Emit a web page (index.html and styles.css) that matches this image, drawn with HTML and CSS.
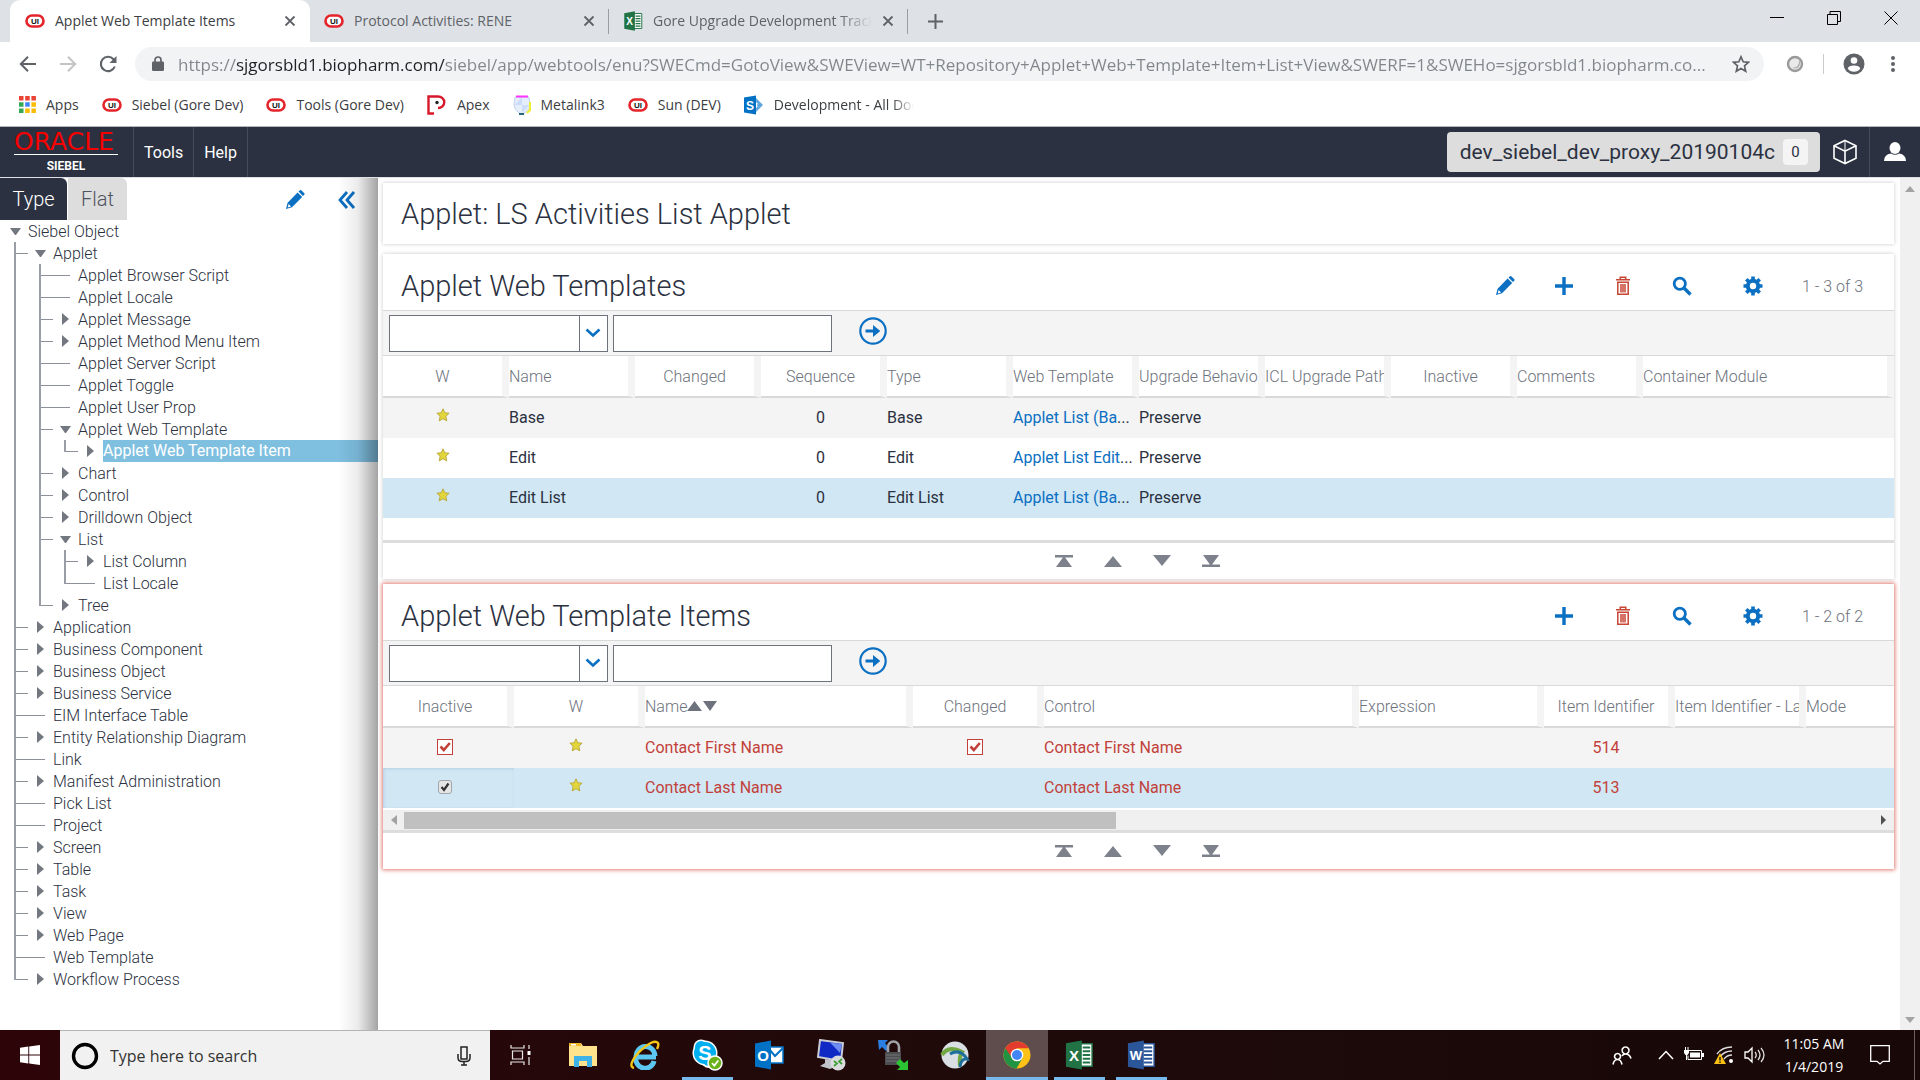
FILE: index.html
```html
<!DOCTYPE html>
<html lang="en">
<head>
  <meta charset="UTF-8">
  <meta name="viewport" content="width=device-width, initial-scale=1.0">
  <title>Applet Web Template Items</title>
  <link rel="stylesheet" href="styles.css">
</head>
<body>
  <!-- shared icons -->
  <svg class="sprite" aria-hidden="true">
    <symbol id="ui" viewBox="0 0 20 14">
      <rect x="1.500" y="1.500" width="17" height="11" rx="5.500" fill="#fff" stroke="#e3242b" stroke-width="2.600"/>
      <text x="10" y="9.800" text-anchor="middle" font-size="8" font-weight="700" fill="#111">UI</text>
    </symbol>
    <symbol id="close" viewBox="0 0 12 12"><path d="M1.5 1.5l9 9M10.5 1.5l-9 9" stroke="#5f6368" stroke-width="1.8"/></symbol>
    <symbol id="pencil" viewBox="0 0 20 20"><path d="M13.5 1.5l1.500-1.200q.8-.5 1.500.2l2.800 2.800q.6.700 0 1.400l-1.400 1.400zM12.600 2.500l4.600 4.600L7 17.200 1 19l1.600-6.300zM3.600 14l-.9 3.400 3.400-1z" fill="#0b6fc2" fill-rule="evenodd"/></symbol>
    <symbol id="plus" viewBox="0 0 20 20"><path d="M8.300 1h3.400v7.300H19v3.400h-7.300V19H8.300v-7.300H1V8.300h7.300z" fill="#0b6fc2"/></symbol>
    <symbol id="trash" viewBox="0 0 16 20">
      <path d="M1 3.700h14M5.300 3.500V1.200h5.400v2.300M2 6.200h12" fill="none" stroke="#c74634" stroke-width="1.600"/>
      <path d="M2.800 6v12.200h10.400V6M6 8v8.500M10 8v8.500M8 8v8.500" fill="none" stroke="#c74634" stroke-width="1.500"/>
    </symbol>
    <symbol id="search" viewBox="0 0 20 20"><circle cx="7.800" cy="7.800" r="5.600" fill="none" stroke="#0b6fc2" stroke-width="2.800"/><path d="M12 12l6.500 6.500" stroke="#0b6fc2" stroke-width="3.400"/></symbol>
    <symbol id="gear" viewBox="0 0 20 20">
      <circle cx="10" cy="10" r="5.200" fill="none" stroke="#0b6fc2" stroke-width="4"/>
      <path d="M10 .5v4M10 15.500v4M.5 10h4M15.500 10h4M3.300 3.300l2.800 2.800M13.900 13.900l2.800 2.800M3.300 16.700l2.800-2.800M13.900 6.100l2.800-2.800" stroke="#0b6fc2" stroke-width="3.600"/>
    </symbol>
    <symbol id="go" viewBox="0 0 28 28"><circle cx="14" cy="14" r="12.700" fill="none" stroke="#0b6fc2" stroke-width="2.200"/><path d="M6.500 12.500h7.500V8l7.300 6-7.300 6v-4.500H6.500z" fill="#0b6fc2"/></symbol>
    <symbol id="star" viewBox="0 0 14 14"><path d="M7 .8l1.800 4 4.300.4-3.200 3 .9 4.700L7 10.700l-3.800 2.200.9-4.700-3.200-3 4.300-.4z" fill="#e3d63c" stroke="#b5a738" stroke-width=".9"/></symbol>
    <symbol id="first" viewBox="0 0 20 12"><path d="M1 0h18v2.500H1zM10 1l8 11H2z" fill="#7d818c"/></symbol>
    <symbol id="prev" viewBox="0 0 20 12"><path d="M10 1l9 11H1z" fill="#7d818c"/></symbol>
    <symbol id="next" viewBox="0 0 20 12"><path d="M10 11L1 0h18z" fill="#7d818c"/></symbol>
    <symbol id="last" viewBox="0 0 20 12"><path d="M1 12h18V9.500H1zM10 11l8-11H2z" fill="#7d818c"/></symbol>
    <symbol id="excel" viewBox="0 0 30 32">
      <path d="M16 4h13v24H16z" fill="#fff" stroke="#217346" stroke-width="1.500"/>
      <path d="M19 8h8M19 12h8M19 16h8M19 20h8M19 24h8" stroke="#217346" stroke-width="2"/>
      <path d="M1 3.500L18 .5v31L1 28.500z" fill="#217346"/>
      <text x="9.500" y="22" text-anchor="middle" font-size="16" font-weight="700" fill="#fff">X</text>
    </symbol>
    <symbol id="word" viewBox="0 0 30 32">
      <path d="M16 4h13v24H16z" fill="#fff" stroke="#2b579a" stroke-width="1.500"/>
      <path d="M18 8h9M18 12h9M18 16h9M18 20h9M18 24h9" stroke="#2b579a" stroke-width="2"/>
      <path d="M1 3.500L18 .5v31L1 28.500z" fill="#2b579a"/>
      <text x="9.500" y="21" text-anchor="middle" font-size="14" font-weight="700" fill="#fff">W</text>
    </symbol>
  </svg>

  <header class="browser">
    <div class="tab-strip">
      <div class="tab active">
        <svg class="fav"><use href="#ui"/></svg>
        <span class="tab-title">Applet Web Template Items</span>
        <button class="plain" aria-label="Close tab"><svg class="x"><use href="#close"/></svg></button>
      </div>
      <div class="tab">
        <svg class="fav"><use href="#ui"/></svg>
        <span class="tab-title">Protocol Activities: RENE</span>
        <button class="plain" aria-label="Close tab"><svg class="x"><use href="#close"/></svg></button>
      </div>
      <div class="tab">
        <svg class="fav tall"><use href="#excel"/></svg>
        <span class="tab-title fade">Gore Upgrade Development Tracker</span>
        <button class="plain" aria-label="Close tab"><svg class="x"><use href="#close"/></svg></button>
      </div>
      <button class="plain new-tab" aria-label="New tab"><svg width="15" height="15" viewBox="0 0 15 15"><path d="M7.500 0v15M0 7.500h15" stroke="#5f6368" stroke-width="2"/></svg></button>
      <div class="window-buttons">
        <button class="plain" aria-label="Minimize"><svg width="14" height="14"><path d="M0 6.500h14" stroke="#000"/></svg></button>
        <button class="plain" aria-label="Restore"><svg width="14" height="14"><path d="M.5 3.500h10v10H.5zM3 3.500V.5h10.500v10H11" fill="none" stroke="#000"/></svg></button>
        <button class="plain" aria-label="Close"><svg width="14" height="14"><path d="M.5.5l13 13M13.500.5l-13 13" stroke="#000"/></svg></button>
      </div>
    </div>

    <div class="toolbar">
      <button class="plain" aria-label="Back"><svg width="18" height="18"><path d="M17 9H2.500M9 1.800L1.800 9 9 16.200" fill="none" stroke="#5f6368" stroke-width="2"/></svg></button>
      <button class="plain" aria-label="Forward"><svg width="18" height="18"><path d="M1 9h14.500M9 1.800L16.200 9 9 16.200" fill="none" stroke="#c2c4c6" stroke-width="2"/></svg></button>
      <button class="plain" aria-label="Reload"><svg width="18" height="18"><path d="M15.800 11.500A7.200 7.200 0 1 1 14.500 4.200l1.500 1.600" fill="none" stroke="#5f6368" stroke-width="2.100"/><path d="M17.500 1v7h-7z" fill="#5f6368"/></svg></button>
      <div class="omnibox">
        <svg width="12" height="16" viewBox="0 0 12 16"><path d="M3 6V4a3 3 0 0 1 6 0v2" fill="none" stroke="#5f6368" stroke-width="1.700"/><rect x="0" y="5.500" width="12" height="9.500" rx="1.300" fill="#5f6368"/></svg>
        <input class="url" type="text" aria-label="Address" value="https://sjgorsbld1.biopharm.com/siebel/app/webtools/enu?SWECmd=GotoView&amp;SWEView=WT+Repository+Applet+Web+Template+Item+List+View&amp;SWERF=1&amp;SWEHo=sjgorsbld1.biopharm.co...">
        <button class="plain" aria-label="Bookmark"><svg width="18" height="18"><path d="M9 1.800l2.200 5 5.300.5-4 3.600 1.200 5.300L9 13.400l-4.700 2.800 1.200-5.300-4-3.600 5.300-.5z" fill="none" stroke="#5f6368" stroke-width="1.700"/></svg></button>
      </div>
      <div class="toolbar-right">
        <svg width="18" height="20"><circle cx="9" cy="10" r="7" fill="#e9e9e9" stroke="#9a9a9a" stroke-width="2.400"/><path d="M13 6q1 7-7 8 8 2 8-6z" fill="#aaa"/></svg>
        <span class="toolbar-line"></span>
        <svg width="22" height="22"><circle cx="11" cy="11" r="10.500" fill="#5f6368"/><circle cx="11" cy="7.500" r="3.300" fill="#fff"/><path d="M4.700 15.500q1-3 6.300-3t6.300 3q-2.300 3.300-6.300 3.300t-6.300-3.300z" fill="#fff"/></svg>
        <svg width="18" height="18"><g fill="#5f6368"><circle cx="9" cy="3" r="2"/><circle cx="9" cy="9" r="2"/><circle cx="9" cy="15" r="2"/></g></svg>
      </div>
    </div>

    <nav class="bookmarks">
      <a href="#"><svg width="17" height="17" viewBox="0 0 17 17"><path d="M0 0h4.500v4.500H0zM6.200 0h4.500v4.500H6.200zM12.400 0h4.500v4.500h-4.500z" fill="#ea4335"/><path d="M0 6.200h4.500v4.500H0zM0 12.400h4.500v4.500H0z" fill="#34a853"/><path d="M6.200 6.200h4.500v4.500H6.200z" fill="#4285f4"/><path d="M12.400 6.200h4.500v4.500h-4.500zM6.200 12.400h4.500v4.500H6.200zM12.400 12.400h4.500v4.500h-4.500z" fill="#fbbc05"/></svg>Apps</a>
      <a href="#"><svg class="fav"><use href="#ui"/></svg>Siebel (Gore Dev)</a>
      <a href="#"><svg class="fav"><use href="#ui"/></svg>Tools (Gore Dev)</a>
      <a href="#"><svg width="20" height="20"><path d="M7 18.500H1.500v-17H11a6 5.500 0 0 1 0 11.500" fill="none" stroke="#d7182a" stroke-width="2.400"/><circle cx="10" cy="7.500" r="1.700" fill="#222"/></svg>Apex</a>
      <a href="#"><svg width="18" height="20"><path d="M2 2h14l1 8q-1 7-8 9-7-2-8-9z" fill="#e6eefc" stroke="#c4d2ec"/><path d="M9 2v8H1.500M9 18v-8h7.500" fill="#cddcf8"/><path d="M3 1.500h12" stroke="#f3f" stroke-width="2"/><path d="M17 7v8l-3 3" fill="none" stroke="#ee3" stroke-width="2"/><path d="M6 19h5" stroke="#267" stroke-width="2"/></svg>Metalink3</a>
      <a href="#"><svg class="fav"><use href="#ui"/></svg>Sun (DEV)</a>
      <a href="#"><svg width="20" height="20"><path d="M11 3l7 7-7 7M12 6l4 4-4 4M13 10h5" fill="none" stroke="#5da4dc" stroke-width="1.400"/><path d="M0 2.500L12 .5v19L0 17.500z" fill="#0072c6"/><text x="6" y="14.500" text-anchor="middle" font-size="12" font-weight="700" fill="#fff">S</text></svg><span class="fade bookmark-long">Development - All Documents</span></a>
    </nav>
  </header>

  <header class="app-bar">
    <div class="brand">
      <div class="brand-name">ORACLE</div>
      <div class="brand-product">SIEBEL</div>
    </div>
    <button class="menu">Tools</button>
    <button class="menu">Help</button>
    <div class="workspace">dev_siebel_dev_proxy_20190104c <span class="count">0</span></div>
    <button class="plain cube" aria-label="Workspace"><svg width="26" height="26"><path d="M13 1.500l11 5.300v12.400l-11 5.300-11-5.300V6.800zM2 6.800l11 5.400 11-5.400M13 12.200v12.300" fill="none" stroke="#fff" stroke-width="1.600"/><path d="M13 1.500v10.700" stroke="#fff"/></svg></button>
    <button class="plain user" aria-label="User"><svg width="22" height="20"><ellipse cx="11" cy="6" rx="5.500" ry="6" fill="#fff"/><path d="M0 19q0-6.500 7-7.500 4 2.500 8 0 7 1 7 7.500z" fill="#fff"/></svg></button>
  </header>

  <div class="workarea">
    <aside class="explorer">
      <div class="explorer-head">
        <button class="type-tab selected">Type</button>
        <button class="type-tab">Flat</button>
        <button class="plain edit-tree" aria-label="Edit"><svg width="20" height="20"><use href="#pencil"/></svg></button>
        <button class="plain" aria-label="Collapse"><svg width="18" height="18"><path d="M9 1L2 9l7 8M16 1L9 9l7 8" fill="none" stroke="#0b6fc2" stroke-width="2.800"/></svg></button>
      </div>
      <ul class="tree">
        <li class="open"><div class="node">Siebel Object</div>
          <ul>
            <li class="open"><div class="node">Applet</div>
              <ul>
                <li><div class="node">Applet Browser Script</div></li>
                <li><div class="node">Applet Locale</div></li>
                <li class="shut"><div class="node">Applet Message</div></li>
                <li class="shut"><div class="node">Applet Method Menu Item</div></li>
                <li><div class="node">Applet Server Script</div></li>
                <li><div class="node">Applet Toggle</div></li>
                <li><div class="node">Applet User Prop</div></li>
                <li class="open"><div class="node">Applet Web Template</div>
                  <ul>
                    <li class="shut"><div class="node"><span class="current">Applet Web Template Item</span></div></li>
                  </ul>
                </li>
                <li class="shut"><div class="node">Chart</div></li>
                <li class="shut"><div class="node">Control</div></li>
                <li class="shut"><div class="node">Drilldown Object</div></li>
                <li class="open"><div class="node">List</div>
                  <ul>
                    <li class="shut"><div class="node">List Column</div></li>
                    <li><div class="node">List Locale</div></li>
                  </ul>
                </li>
                <li class="shut"><div class="node">Tree</div></li>
              </ul>
            </li>
            <li class="shut"><div class="node">Application</div></li>
            <li class="shut"><div class="node">Business Component</div></li>
            <li class="shut"><div class="node">Business Object</div></li>
            <li class="shut"><div class="node">Business Service</div></li>
            <li><div class="node">EIM Interface Table</div></li>
            <li class="shut"><div class="node">Entity Relationship Diagram</div></li>
            <li><div class="node">Link</div></li>
            <li class="shut"><div class="node">Manifest Administration</div></li>
            <li><div class="node">Pick List</div></li>
            <li><div class="node">Project</div></li>
            <li class="shut"><div class="node">Screen</div></li>
            <li class="shut"><div class="node">Table</div></li>
            <li class="shut"><div class="node">Task</div></li>
            <li class="shut"><div class="node">View</div></li>
            <li class="shut"><div class="node">Web Page</div></li>
            <li><div class="node">Web Template</div></li>
            <li class="shut"><div class="node">Workflow Process</div></li>
          </ul>
        </li>
      </ul>
    </aside>

    <main class="content">
      <section class="panel title-panel">
        <h1>Applet: LS Activities List Applet</h1>
      </section>

      <section class="panel">
        <div class="panel-head">
          <h2>Applet Web Templates</h2>
          <button class="plain" aria-label="Edit"><svg width="20" height="20"><use href="#pencil"/></svg></button>
          <button class="plain" aria-label="New"><svg width="20" height="20"><use href="#plus"/></svg></button>
          <button class="plain" aria-label="Delete"><svg width="16" height="20"><use href="#trash"/></svg></button>
          <button class="plain" aria-label="Query"><svg width="20" height="20"><use href="#search"/></svg></button>
          <button class="plain gear" aria-label="Menu"><svg width="20" height="20"><use href="#gear"/></svg></button>
          <span class="range">1 - 3 of 3</span>
        </div>
        <div class="filter">
          <select aria-label="Search field"><option></option></select>
          <input type="text" aria-label="Search value">
          <button class="plain go" aria-label="Go"><svg width="28" height="28"><use href="#go"/></svg></button>
        </div>
        <table class="templates">
          <thead>
            <tr>
              <th class="mid">W</th>
              <th>Name</th>
              <th class="mid">Changed</th>
              <th class="mid">Sequence</th>
              <th>Type</th>
              <th>Web Template</th>
              <th>Upgrade Behavior</th>
              <th>ICL Upgrade Path</th>
              <th class="mid">Inactive</th>
              <th>Comments</th>
              <th class="rest">Container Module</th>
            </tr>
          </thead>
          <tbody>
            <tr class="odd">
              <td class="mid"><svg class="star"><use href="#star"/></svg></td><td>Base</td><td></td><td class="mid">0</td><td>Base</td><td><a href="#">Applet List (Ba</a>...</td><td>Preserve</td><td></td><td></td><td></td><td></td>
            </tr>
            <tr>
              <td class="mid"><svg class="star"><use href="#star"/></svg></td><td>Edit</td><td></td><td class="mid">0</td><td>Edit</td><td><a href="#">Applet List Edit</a>...</td><td>Preserve</td><td></td><td></td><td></td><td></td>
            </tr>
            <tr class="picked">
              <td class="mid"><svg class="star"><use href="#star"/></svg></td><td>Edit List</td><td></td><td class="mid">0</td><td>Edit List</td><td><a href="#">Applet List (Ba</a>...</td><td>Preserve</td><td></td><td></td><td></td><td></td>
            </tr>
          </tbody>
        </table>
        <div class="blank"></div>
        <div class="pager">
          <button class="plain" aria-label="First"><svg width="20" height="12"><use href="#first"/></svg></button>
          <button class="plain" aria-label="Previous"><svg width="20" height="12"><use href="#prev"/></svg></button>
          <button class="plain" aria-label="Next"><svg width="20" height="12"><use href="#next"/></svg></button>
          <button class="plain" aria-label="Last"><svg width="20" height="12"><use href="#last"/></svg></button>
        </div>
      </section>

      <section class="panel focused">
        <div class="panel-head">
          <h2>Applet Web Template Items</h2>
          <button class="plain" aria-label="New"><svg width="20" height="20"><use href="#plus"/></svg></button>
          <button class="plain" aria-label="Delete"><svg width="16" height="20"><use href="#trash"/></svg></button>
          <button class="plain" aria-label="Query"><svg width="20" height="20"><use href="#search"/></svg></button>
          <button class="plain gear" aria-label="Menu"><svg width="20" height="20"><use href="#gear"/></svg></button>
          <span class="range">1 - 2 of 2</span>
        </div>
        <div class="filter">
          <select aria-label="Search field"><option></option></select>
          <input type="text" aria-label="Search value">
          <button class="plain go" aria-label="Go"><svg width="28" height="28"><use href="#go"/></svg></button>
        </div>
        <table class="items">
          <thead>
            <tr>
              <th class="mid">Inactive</th>
              <th class="mid">W</th>
              <th class="name">Name<svg class="sort" width="30" height="11"><path d="M7.500 0L15 10H0zM23 10L16 0h14z" fill="#6d727c"/></svg></th>
              <th class="mid">Changed</th>
              <th class="control">Control</th>
              <th class="expression">Expression</th>
              <th class="mid">Item Identifier</th>
              <th>Item Identifier - Language</th>
              <th class="rest">Mode</th>
            </tr>
          </thead>
          <tbody>
            <tr class="odd">
              <td class="mid"><input type="checkbox" class="red-check" aria-label="Inactive" checked></td><td class="mid"><svg class="star"><use href="#star"/></svg></td><td>Contact First Name</td><td class="mid"><input type="checkbox" class="red-check" aria-label="Changed" checked></td><td>Contact First Name</td><td></td><td class="mid">514</td><td></td><td></td>
            </tr>
            <tr class="picked">
              <td class="mid cell-focus"><input type="checkbox" class="grey-check" aria-label="Inactive" checked></td><td class="mid"><svg class="star"><use href="#star"/></svg></td><td>Contact Last Name</td><td></td><td>Contact Last Name</td><td></td><td class="mid">513</td><td></td><td></td>
            </tr>
          </tbody>
        </table>
        <div class="hscroll">
          <svg width="21" height="20"><path d="M14 5v10l-6-5z" fill="#a3a3a3"/></svg>
          <div class="track"><div class="thumb"></div></div>
          <svg width="21" height="20"><path d="M8 5v10l5-5z" fill="#505050"/></svg>
        </div>
        <div class="pager">
          <button class="plain" aria-label="First"><svg width="20" height="12"><use href="#first"/></svg></button>
          <button class="plain" aria-label="Previous"><svg width="20" height="12"><use href="#prev"/></svg></button>
          <button class="plain" aria-label="Next"><svg width="20" height="12"><use href="#next"/></svg></button>
          <button class="plain" aria-label="Last"><svg width="20" height="12"><use href="#last"/></svg></button>
        </div>
      </section>
    </main>

    <div class="vscroll">
      <svg width="20" height="20"><path d="M5 14h10l-5-6z" fill="#a3a3a3"/></svg>
      <svg width="20" height="20"><path d="M5 7h10l-5 6z" fill="#a3a3a3"/></svg>
    </div>
  </div>

  <footer class="taskbar">
    <button class="plain start" aria-label="Start"><svg width="20" height="20"><path d="M0 2.700l8.300-1.200v8H0zM9.200 1.400L20 0v9.500H9.200zM0 10.400h8.300v8L0 17.200zM9.200 10.400H20V20L9.200 18.500z" fill="#fff"/></svg></button>
    <div class="search-box">
      <svg width="28" height="28"><circle cx="14" cy="14" r="11.500" fill="none" stroke="#000" stroke-width="3.400"/></svg>
      <input type="text" placeholder="Type here to search" aria-label="Search">
      <svg width="14" height="20"><rect x="4" y="1" width="6" height="12" fill="none" stroke="#222" stroke-width="1.500"/><path d="M1 8v3.500q0 4 4 4h4q4 0 4-4V8M7 15.500V19M4 19h6" fill="none" stroke="#222" stroke-width="1.500"/></svg>
    </div>
    <button class="plain task" aria-label="Task view"><svg width="22" height="20"><path d="M1 0v3h13V0M1 20v-3h13v3M2.500 6h10v8h-10zM19 0v4M19 12v8" fill="none" stroke="#e8e8e8" stroke-width="1.200"/><path d="M17.500 6h3v4h-3z" fill="#fff"/></svg></button>
    <button class="plain task" aria-label="File Explorer"><svg width="28" height="26"><path d="M0 1h12l2 3h14v20H0z" fill="#ffe38c"/><path d="M0 1h12v3H0z" fill="#f0b429"/><path d="M2 2h5v1.500H2z" fill="#fff"/><path d="M5 14h18v11h-5v-6h-8v6H5z" fill="#3fb3e8"/></svg></button>
    <button class="plain task" aria-label="Internet Explorer"><svg width="30" height="30"><path d="M6 17h20M6 17a9 9.500 0 0 1 19-1M6 17a9 9 0 0 0 18 4" fill="none" stroke="#5cc8f2" stroke-width="5"/><path d="M4 28Q-3 26 9 12 24-2 28 3q1 2-1 6" fill="none" stroke="#f5c518" stroke-width="2.400"/></svg></button>
    <button class="plain task running" aria-label="Skype"><svg width="32" height="32"><circle cx="10" cy="8" r="7.500" fill="#fff"/><circle cx="14" cy="14" r="12.500" fill="#fff"/><circle cx="18" cy="21" r="8" fill="#fff"/><circle cx="10" cy="8" r="6" fill="#00aff0"/><circle cx="14" cy="14" r="11" fill="#00aff0"/><circle cx="18" cy="20" r="7" fill="#00aff0"/><text x="14" y="21" text-anchor="middle" font-size="20" font-weight="700" fill="#fff">S</text><circle cx="24" cy="24" r="7" fill="#6bb11c" stroke="#fff" stroke-width="1.500"/><path d="M21 24l2.300 2.500 4-5" fill="none" stroke="#fff" stroke-width="1.800"/></svg></button>
    <button class="plain task" aria-label="Outlook"><svg width="30" height="30"><path d="M14 7h15v16H14z" fill="#fff" stroke="#0072c6" stroke-width="1.500"/><path d="M15 9l6 7 8-8" fill="none" stroke="#0072c6" stroke-width="2"/><path d="M1 3.500L17 .5v29L1 26.500z" fill="#0072c6"/><text x="9" y="20.500" text-anchor="middle" font-size="15" font-weight="700" fill="#fff">O</text></svg></button>
    <button class="plain task" aria-label="Remote Desktop"><svg width="32" height="32"><path d="M10 20l7 1v4l5 2-7 3-10-3 5-3z" fill="#bfc3ca"/><path d="M5 1l23 3-2 18L3 18z" fill="#1029c4" stroke="#c9ccd4" stroke-width="2"/><path d="M15 3.500l12 1.500-2 9z" fill="#6f8cf0"/><circle cx="23" cy="24" r="7.500" fill="#d9dbdd"/><path d="M19 22l3 2.500-3 2.500M27 20l-3 2.500 3 2.500" fill="none" stroke="#3a9f35" stroke-width="1.700"/></svg></button>
    <button class="plain task" aria-label="Secure Transfer"><svg width="32" height="32"><path d="M1 1h10l-3 3 4 5-3 3-4-4-3 3z" fill="#2a7de1"/><path d="M11 14V8a5.500 5.500 0 0 1 11 0v6" fill="none" stroke="#9fa2a6" stroke-width="2.600"/><rect x="8" y="13" width="16" height="13" fill="#4b4d50"/><path d="M9 16h14M9 19h14M9 22h14" stroke="#777"/><path d="M31 31H20l3-3-4-4 4-4 4 4 4-3z" fill="#2bc433"/></svg></button>
    <button class="plain task" aria-label="AnyConnect"><svg width="30" height="30"><circle cx="15" cy="15" r="13.500" fill="#d9dfe3"/><path d="M2 15Q8 5 22 12q-3 4-2 14" fill="none" stroke="#74a843" stroke-width="4"/><path d="M10 14q10-6 17 5-6-1-7 8" fill="none" stroke="#1e6f9c" stroke-width="3"/></svg></button>
    <button class="plain task running front" aria-label="Chrome"><svg width="28" height="28" viewBox="0 0 28 28"><circle cx="14" cy="14" r="13.500" fill="#fbc116"/><path d="M14 14L2.300 7.200A13.500 13.500 0 0 0 13.500 27.500L19.500 17z" fill="#229342"/><path d="M2.300 7.200A13.500 13.500 0 0 1 25.700 7.200H14l-6 8z" fill="#e33b2e"/><circle cx="14" cy="14" r="6.300" fill="#fff"/><circle cx="14" cy="14" r="5" fill="#4285f4"/></svg></button>
    <button class="plain task running" aria-label="Excel"><svg width="28" height="30"><use href="#excel"/></svg></button>
    <button class="plain task running" aria-label="Word"><svg width="28" height="30"><use href="#word"/></svg></button>
    <div class="tray">
      <svg class="people" width="20" height="20"><path d="M13.500 9a3.500 3.500 0 1 1 .1 0M5.500 14.500a3 3 0 1 1 .1 0M1 19.500q1-5 4.500-5t4.500 5M10 11q1-2 3.500-2 4 0 5.500 4.500" fill="none" stroke="#fff" stroke-width="1.600"/></svg>
      <svg width="16" height="10"><path d="M1 9l7-7.500L15 9" fill="none" stroke="#fff" stroke-width="1.500"/></svg>
      <svg width="20" height="16"><path d="M4 3.500h13.500v9H4v-4" fill="none" stroke="#fff"/><path d="M6 5.500h10v5H6zM18 6h2v4h-2zM0 3h5v3L3.500 8h-2L0 6z" fill="#fff"/><path d="M1.500 0v3M4 0v3M2.500 8v5" stroke="#fff"/></svg>
      <svg width="20" height="20"><path d="M3 9Q8 2 18 2M6 12Q10 6 18 6M10 14q3-4 8-4" fill="none" stroke="#ddd" stroke-width="1.400"/><circle cx="17" cy="16" r="2" fill="#fff"/><path d="M6 8l6 11H0z" fill="#fbbf12"/><path d="M6 12v3.500M6 16.500V18" stroke="#222" stroke-width="1.500"/></svg>
      <svg width="22" height="18"><path d="M1 6h3l4-4v14l-4-4H1z" fill="none" stroke="#fff" stroke-width="1.300"/><path d="M11 6q2.500 3 0 6M14 4q4 5 0 10M17 2q6 7 0 14" fill="none" stroke="#ddd" stroke-width="1.300"/></svg>
      <div class="clock"><div>11:05 AM</div><div>1/4/2019</div></div>
      <svg width="20" height="20"><path d="M.7.7h18.600v15.600H13L10 19l-3-2.700H.7z" fill="none" stroke="#fff" stroke-width="1.300"/></svg>
      <span class="show-desktop"></span>
    </div>
  </footer>
</body>
</html>
```

FILE: styles.css
```css
*{
  box-sizing: border-box;
}
body{
  margin: 0;
  min-height: 100vh;
  display: flex;
  flex-direction: column;
  background-color: white;
  color: #2b3140;
  font-family: Roboto, sans-serif;
  font-size: 16px;
}
svg{
  display: block;
  flex-shrink: 0;
}
svg text{
  font-family: "Liberation Sans", sans-serif;
}
.sprite{
  position: absolute;
  width: 0;
  height: 0;
}
a{
  color: #0b6fc2;
  text-decoration: none;
}
.plain{
  border: none;
  background: none;
  padding: 0;
  display: flex;
  align-items: center;
  justify-content: center;
  cursor: pointer;
}

/* browser frame */
.browser{
  font-family: "Open Sans", sans-serif;
  font-size: 14px;
  border-bottom: 1px solid #b4b6ba;
}
.tab-strip{
  display: flex;
  height: 42px;
  padding-left: 10px;
  background-color: #dee1e6;
}
.tab{
  display: flex;
  align-items: center;
  gap: 10px;
  width: 299px;
  padding: 0 14px;
  color: #5f6368;
  background: linear-gradient(#9a9da1, #9a9da1) no-repeat right 9px / 1px 25px;
}
.tab.active{
  width: 300px;
  padding-left: 15px;
  color: #3c4043;
  background: white;
  border-radius: 10px 10px 0 0;
}
.tab-title{
  flex: 1;
  padding-bottom: 2px;
  overflow: hidden;
  white-space: nowrap;
}
.fade{
  -webkit-mask-image: linear-gradient(to right, black 85%, transparent);
  mask-image: linear-gradient(to right, black 85%, transparent);
}
.fav{
  width: 20px;
  height: 14px;
}
.fav.tall{
  height: 20px;
}
.x{
  width: 12px;
  height: 12px;
}
.new-tab{
  width: 54px;
}
.window-buttons{
  display: flex;
  gap: 43px;
  margin-left: auto;
  padding: 0 22px 6px 0;
}
.toolbar{
  display: flex;
  align-items: center;
  gap: 22px;
  height: 44px;
  padding: 0 18px 0 19px;
}
.omnibox{
  flex: 1;
  display: flex;
  align-items: center;
  gap: 14px;
  height: 34px;
  margin-left: -4px;
  padding: 0 14px 0 17px;
  border-radius: 17px;
  background-color: #f1f3f4;
}
/* host part of the address is darker than the rest */
.url{
  flex: 1;
  min-width: 0;
  border: none;
  outline: none;
  padding: 0;
  font-family: "Open Sans", sans-serif;
  font-size: 17px;
  color: transparent;
  background: linear-gradient(to right, #80868b 59px, #202124 59px, #202124 267px, #80868b 267px);
  -webkit-background-clip: text;
  background-clip: text;
}
.toolbar-right{
  display: flex;
  align-items: center;
  gap: 19px;
}
.toolbar-line{
  width: 1px;
  height: 20px;
  background-color: #c8cacd;
}
.bookmarks{
  display: flex;
  align-items: center;
  gap: 23px;
  height: 40px;
  padding: 0 0 3px 19px;
}
.bookmarks a{
  display: flex;
  align-items: center;
  gap: 10px;
  color: #3c4043;
  white-space: nowrap;
}
.bookmark-long{
  width: 140px;
  overflow: hidden;
}

/* application header */
.app-bar{
  display: flex;
  align-items: center;
  height: 51px;
  background-color: #2b3140;
  border-bottom: 1px solid #e0e0e4;
}
.brand{
  width: 134px;
  height: 50px;
  padding: 2px 0 0 14px;
  color: white;
  border-right: 1px solid #454b59;
}
.brand-name{
  width: 104px;
  height: 26px;
  border-bottom: 1px solid white;
  color: #f80000;
  font-family: "DejaVu Sans", sans-serif;
  font-size: 25px;
  line-height: 25px;
}
.brand-product{
  width: 104px;
  text-align: center;
  font-size: 12px;
  line-height: 22px;
  font-weight: 700;
}
.menu{
  height: 50px;
  padding: 0 10px;
  border: none;
  border-right: 1px solid #454b59;
  background: none;
  color: white;
  font-family: Roboto, sans-serif;
  font-size: 16px;
  font-weight: 400;
}
.workspace{
  display: flex;
  align-items: center;
  gap: 8px;
  height: 40px;
  margin-left: auto;
  padding: 0 12px 0 13px;
  border-radius: 4px;
  background-color: #ddd;
  font-size: 21px;
}
.count{
  width: 25px;
  line-height: 26px;
  border-radius: 4px;
  background-color: #f4f4f4;
  text-align: center;
  font-size: 15px;
}
.cube{
  width: 50px;
  height: 50px;
  border-right: 1px solid #454b59;
}
.user{
  width: 50px;
  height: 50px;
}

.workarea{
  flex: 1;
  display: flex;
}

/* object explorer */
.explorer{
  position: relative;
  width: 378px;
  flex-shrink: 0;
}
.explorer::after{
  content: "";
  position: absolute;
  top: 0;
  right: 0;
  bottom: 0;
  width: 40px;
  background: linear-gradient(to right, rgba(0,0,0,0), rgba(0,0,0,.08) 50%, rgba(0,0,0,.36));
  pointer-events: none;
}
.explorer-head{
  display: flex;
  gap: 1px;
  height: 42px;
  padding-right: 22px;
}
.explorer-head .plain{
  padding-top: 2px;
}
.type-tab{
  width: 59px;
  border: none;
  border-radius: 0 6px 0 0;
  background-color: #ddd;
  color: #4d5361;
  font-family: Roboto, sans-serif;
  font-size: 20px;
  font-weight: 300;
}
.type-tab.selected{
  width: 67px;
  background-color: #2b3140;
  color: white;
}
.edit-tree{
  margin-left: auto;
  margin-right: 32px;
}
.tree, .tree ul{
  list-style: none;
  margin: 0;
  padding: 0;
}
.node{
  display: flex;
  align-items: center;
  height: 22px;
  padding-left: 19px;
  font-weight: 300;
  white-space: nowrap;
}
.node::before{
  content: "";
  width: 20px;
  height: 12px;
  flex-shrink: 0;
}
.open > .node::before{
  background: #727780;
  clip-path: polygon(2px 3px, 13px 3px, 8px 10px, 7px 10px);
}
.shut > .node::before{
  background: #727780;
  clip-path: polygon(4px 0, 11px 6px, 4px 12px);
}
.tree > li > .node{
  padding-left: 8px;
}
.tree > li > ul{
  padding-left: 14px;
}
.tree ul ul{
  padding-left: 25px;
}
/* connector lines: stem and branch */
.tree ul > li{
  background:
    linear-gradient(#999da5, #999da5) no-repeat 0 0 / 2px 100%,
    linear-gradient(#8b9099, #8b9099) no-repeat 0 11px / 31px 1px;
}
.tree ul > li.open, .tree ul > li.shut{
  background-size: 2px 100%, 14px 1px;
}
.tree ul > li:last-child{
  background-size: 2px 12px, 31px 1px;
}
.tree ul > li.shut:last-child{
  background-size: 2px 12px, 14px 1px;
}
.current{
  flex: 1;
  line-height: 22px;
  background-color: #7fbfe0;
  color: white;
  font-weight: 400;
}

/* list applets */
.content{
  flex: 1;
  min-width: 0;
  padding: 5px 6px 0 5px;
}
.panel{
  margin-bottom: 5px;
  background-color: white;
  box-shadow: 0 0 4px rgba(0,0,0,.22);
}
.title-panel{
  margin-bottom: 10px;
}
.focused{
  box-shadow: 0 0 4px 1px #e07a70;
}
h1, h2{
  margin: 0;
  font-size: 29px;
  font-weight: 300;
}
h1{
  padding: 2px 0 0 18px;
  line-height: 59px;
}
h2{
  flex: 1;
}
.panel-head{
  display: flex;
  align-items: center;
  height: 57px;
  padding: 8px 31px 0 18px;
  border-bottom: 1px solid #d9d9d9;
}
.panel-head .plain{
  width: 59px;
}
.panel-head .gear{
  width: 82px;
}
.range{
  margin-left: 8px;
  color: #6d727c;
  font-weight: 300;
}
.filter{
  display: flex;
  align-items: center;
  gap: 5px;
  height: 45px;
  padding-left: 6px;
  background-color: #f4f4f4;
  border-bottom: 1px solid #d9d9d9;
}
.filter select, .filter input{
  width: 219px;
  height: 37px;
  border: 1px solid #6d727c;
  border-radius: 0;
  background-color: white;
}
.filter select{
  appearance: none;
  background:
    url("data:image/svg+xml,%3Csvg xmlns='http://www.w3.org/2000/svg' width='16' height='10'%3E%3Cpath d='M1.500 1.500L8 7.500l6.500-6' fill='none' stroke='%230b6fc2' stroke-width='2.600'/%3E%3C/svg%3E") no-repeat right 6px center,
    linear-gradient(#6d727c, #6d727c) no-repeat right 27px top / 1px 100%,
    white;
}
.go{
  height: 37px;
  margin-left: 22px;
  padding-bottom: 4px;
}
table{
  width: 100%;
  table-layout: fixed;
  border-collapse: separate;
  border-spacing: 0;
}
th, td{
  height: 40px;
  padding: 0;
  overflow: hidden;
  white-space: nowrap;
  text-align: left;
}
td{
  padding-bottom: 2px;
}
th{
  width: 126px;
  height: 42px;
  border-right: 7px solid #f4f4f4;
  border-bottom: 2px solid #d9d9d9;
  color: #6d727c;
  font-weight: 300;
}
.items th{
  width: 131px;
}
.items .name{
  width: 268px;
}
.items .control{
  width: 315px;
}
.items .expression{
  width: 185px;
}
.templates .rest, .items .rest{
  width: auto;
}
.items .rest{
  border-right: none;
}
.mid{
  text-align: center;
}
td.mid{
  padding-right: 7px;
}
.items td{
  color: #c2413a;
}
.odd{
  background-color: #f4f4f4;
}
.picked{
  background-color: #d1e7f4;
}
.cell-focus{
  box-shadow: inset 1px 1px 3px rgba(90,140,170,.25);
}
.star{
  width: 14px;
  height: 14px;
  margin: 0 auto 4px;
}
.sort{
  display: inline-block;
}
.red-check, .grey-check{
  appearance: none;
  display: block;
  width: 16px;
  height: 16px;
  margin: 0 auto;
  border: 1px solid #c2413a;
  background: white url("data:image/svg+xml,%3Csvg xmlns='http://www.w3.org/2000/svg' width='12' height='12'%3E%3Cpath d='M1.500 5.500l3.300 3.500 6-7' fill='none' stroke='%23c2413a' stroke-width='2.600'/%3E%3C/svg%3E") no-repeat center;
}
.grey-check{
  width: 14px;
  height: 14px;
  border-color: #a0a6ab;
  border-radius: 3px;
  background: #e6e6e6 url("data:image/svg+xml,%3Csvg xmlns='http://www.w3.org/2000/svg' width='10' height='10'%3E%3Cpath d='M1.500 5l2.500 3L8.500 1.500' fill='none' stroke='%23333' stroke-width='2.200'/%3E%3C/svg%3E") no-repeat center;
}
.blank{
  height: 22px;
}
.hscroll{
  display: flex;
  height: 20px;
  margin-top: 2px;
  background-color: #f0f0f0;
}
.track{
  flex: 1;
  padding: 2px 0 1px;
}
.thumb{
  width: 48.5%;
  height: 17px;
  background-color: #c0c0c0;
}
.pager{
  display: flex;
  align-items: center;
  justify-content: center;
  gap: 29px;
  height: 39px;
  padding-right: 2px;
  border-top: 3px solid #ddd;
}
.vscroll{
  width: 20px;
  display: flex;
  flex-direction: column;
  justify-content: space-between;
  background-color: #f0f0f0;
}

/* taskbar */
.taskbar{
  display: flex;
  height: 50px;
  background: linear-gradient(to right, #2d0509, #1f0a0a 50%, #180808);
  color: white;
  font-family: "Open Sans", sans-serif;
}
.start{
  width: 60px;
}
.search-box{
  display: flex;
  align-items: center;
  gap: 11px;
  width: 430px;
  padding: 0 19px 0 11px;
  background-color: #f1f1f1;
  border-top: 1px solid #b4b4b4;
}
.search-box input{
  flex: 1;
  border: none;
  background: none;
  padding: 0;
  font-family: "Open Sans", sans-serif;
  font-size: 16px;
}
.search-box input::placeholder{
  color: #333;
}
.task{
  width: 62px;
}
.running{
  background: linear-gradient(#76b9ed, #76b9ed) no-repeat center bottom / 51px 3px;
}
.front{
  background-color: #5f4c4c;
  background-size: 100% 3px;
}
.tray{
  display: flex;
  align-items: center;
  gap: 10px;
  margin-left: auto;
  padding-right: 5px;
}
.people{
  margin-right: 16px;
}
.clock{
  width: 76px;
  margin-right: 8px;
  text-align: center;
  font-size: 14px;
  line-height: 23px;
}
.show-desktop{
  width: 1px;
  height: 50px;
  margin-left: 14px;
  background-color: #6d6262;
}
```
